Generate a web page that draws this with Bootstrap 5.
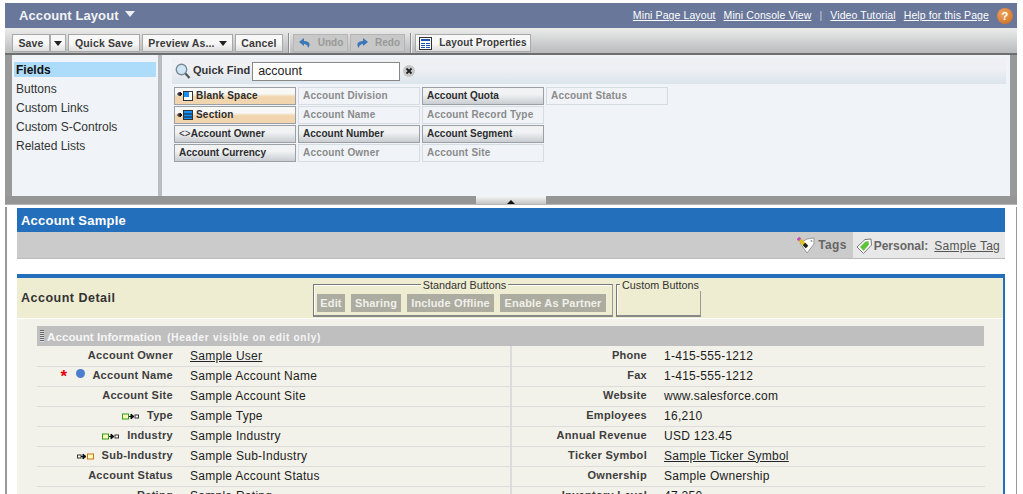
<!DOCTYPE html>
<html lang="en"><head><meta charset="utf-8"><title>Account Layout</title>
<link href="https://cdn.jsdelivr.net/npm/bootstrap@5.3.0/dist/css/bootstrap.min.css" rel="stylesheet">
<style>
html,body{height:494px;overflow:hidden;background:#fff}
body{padding:3px 6px 0 5px;font-family:"Liberation Sans",Arial,sans-serif;font-size:12px;color:#222;line-height:1.2}
a{color:inherit}
.lay-head{height:25px;background:#68779a;color:#fff;padding:0 4px 0 14px}
.lay-title{font-size:13px;font-weight:700;letter-spacing:.1px;color:#f2f3f6}
.caret-w{border:5px solid transparent;border-top:6px solid #eef0f4;border-bottom:0;margin-left:6px;margin-bottom:4px}
.lay-links{font-size:10.5px;letter-spacing:.1px;gap:8px}
.lay-links a{color:#fff}
.lay-pipe{color:#c9cfdc}
.help-dot{width:16px;height:16px;border-radius:50%;background:radial-gradient(circle at 40% 35%,#f0a860,#c8641c);color:#fff;font-weight:700;font-size:11px;line-height:16px;text-align:center}
.lay-tools{height:27px;padding:6px 0 0 7px;background:linear-gradient(#ececec,#b9babc);border-bottom:2px solid #6e6e6e;gap:2px}
.tb{--bs-btn-padding-x:0;--bs-btn-padding-y:0;--bs-btn-font-size:10.5px;--bs-btn-border-radius:0;height:18px;border:1px solid #a9a9a9;background:linear-gradient(#f8f8f8 50%,#dedede);font-weight:700;color:#3a3a3a;letter-spacing:.15px;line-height:16px;display:inline-flex;align-items:center;justify-content:center;white-space:nowrap}
.tb:hover{background:#eee;color:#333;border-color:#a9a9a9}
.tb-off{--bs-btn-font-size:10px;letter-spacing:0;color:#999;background:#c8c8c8;border-color:#b5b5b5;opacity:1}
.tb-sep{width:2px;height:20px;background:#eee;border-left:1px solid #8d8d8d;margin:-1px 1px 0 3px}
.w-save{width:38px}.w-drop{width:16px;margin-left:-2px}.w-qs{width:72px}.w-prev{width:91px;gap:4px}.w-can{width:48px}.w-undo{width:55px;gap:6px}.w-props{width:116px;gap:7px;--bs-btn-font-size:10px}
.tri-d{border:4px solid transparent;border-top:5px solid #222;border-bottom:0}
.lay-main{height:141px;padding:0 7px;background:#999}
.lay-side{width:142px;background:#f0f4f8;padding:7px 2px 0;border-right:4px solid #b9bcc0;box-sizing:content-box;flex:none}
.lay-side div{height:19px;line-height:19px;padding-left:2px;color:#333}
.lay-side .sel{height:15px;line-height:16px;background:#acdcf9;font-weight:700;color:#111;margin-bottom:3px}
.lay-right{flex:1;background:#f0f4f8;padding:3px 4px 0 10px}
.finder{height:26px;background:linear-gradient(#eff0f4 40%,#dbe5ec);padding-left:3px;margin-bottom:3px}
.finder b{color:#333;margin:0 2px;font-size:11px;letter-spacing:.03px}
.finder input{width:148px;height:19px;border:1px solid #888;padding:0 5px;font-size:12.5px;color:#222;background:#fff;border-radius:0;font-family:inherit;outline:0}
.clear-x{margin-left:3px}
.pal{display:grid;grid-template-columns:repeat(4,122px);grid-auto-rows:18px;gap:1px 2px;padding-left:2px}
.pi{border:1px solid #d5dce2;font-size:10px;font-weight:700;color:#8a8a8a;padding-left:4px;letter-spacing:.2px;line-height:16px;white-space:nowrap;display:flex;align-items:center}
.pi-on{border-color:#9aa0a4;color:#2c2c2c;letter-spacing:.02px;background:linear-gradient(#f0f2f4 40%,#c9cdd1)}
.pi-spec{border-color:#9aa0a4;color:#2c2c2c;padding-left:2px;background:linear-gradient(#f8f8f6 35%,#f0d5ae 55%)}
.pi-spec svg{margin-right:3px}
.lay-foot{height:9px;background:#959595;border-bottom:1px solid #b5b5b5;padding-left:471px}
.grip{width:70px;height:8px;background:linear-gradient(#f7f7f7,#c4c4c4);display:flex;justify-content:center;padding-top:3px}
.tri-u{border:4px solid transparent;border-bottom:4px solid #111;border-top:0}
.rec{margin-top:2px;height:290px;border-left:2px solid #999;border-right:1px solid #999;padding:1px 11px 0 10px}
.rec-title{height:24px;background:#236fbb;color:#fff;font-size:13px;font-weight:700;line-height:25px;padding-left:4px;letter-spacing:.22px}
.tagbar{height:27px;background:#cbcbcb;border-bottom:1px solid #bbb}
.tag-a{color:#666;font-weight:700;padding-right:6px;gap:2px;font-size:12px;letter-spacing:.3px}
.tag-b{height:100%;background:#e8e8e8;color:#666;padding:2px 5px 0 3px;font-weight:700;gap:2px}
.tag-b a{font-weight:400;color:#555;margin-left:4px;letter-spacing:.25px}
.rec-box{margin-top:15px;border-top:4px solid #236fbb;border-right:2px solid #236fbb;background:#f3f2ea;height:220px}
.rec-bar{height:41px;background:#eeecd1;border-bottom:1px solid #fff;padding-left:4px}
.rec-bar h2{font-size:12.5px;font-weight:700;margin:0;width:292px;color:#333;letter-spacing:.5px}
.fs{border:1px solid #777;border-right-color:#999;border-bottom-width:2px;border-bottom-color:#888;box-shadow:inset 1px 1px 0 #fff;height:33px;margin:6px 3px 0 0;position:relative;padding:9px 3px 0;gap:6px}
.fs-std{width:300px}
.fs-cus{width:85px}
.fs-l{position:absolute;top:-6px;left:3px;right:0;text-align:center;font-size:10.8px;line-height:12px;color:#333;white-space:nowrap}
.fs-l span{background:#eeecd1;padding:0 2px}
.gb{height:18px;background:#adaca0;color:#f0f0ea;font-size:11px;font-weight:700;line-height:18px;letter-spacing:.15px;text-align:center}
.g-e{width:28px}.g-s{width:50px}.g-i{width:87px}.g-p{width:106px}
.sec-wrap{padding:7px 19px 0 20px}
.sec-h{height:20px;background:#bfbfbf;color:#f6f6f6;font-weight:700;padding-left:3px;line-height:22px}
.sec-h .t1{font-size:11.7px}
.sec-h .t2{font-size:10px;letter-spacing:.7px;margin-left:6px}
.dots{width:4px;height:12px;margin-right:3px;background:repeating-linear-gradient(#666 0 1px,#ddd 1px 2px);vertical-align:-1px;display:inline-block}
.det{table-layout:fixed;width:100%;border-collapse:collapse}
.det td{height:20px;padding:0;border-bottom:1px solid #dcdcdc;white-space:nowrap;letter-spacing:.27px;color:#1c1c1c}
.det .k{text-align:right;font-size:11px;font-weight:700;color:#3d3d3d;padding-right:8px;letter-spacing:.3px;width:144px}
.det .k2{width:144px;border-left:2px solid #dcdcdc}
.det .v{padding-left:9px;width:330px}
.det svg{vertical-align:-1px}
.dot-b{display:inline-block;width:9px;height:9px;border-radius:50%;background:#4a7fd0;margin-right:7px;vertical-align:1px}
.req{color:#e8000d;font-weight:700;font-size:17px;line-height:10px;margin-right:9px;vertical-align:-3px}
</style></head>
<body>
<div class="lay-head d-flex align-items-center justify-content-between">
 <div class="d-flex align-items-center"><span class="lay-title">Account Layout</span><span class="caret-w"></span></div>
 <div class="lay-links d-flex align-items-center">
  <a href="#">Mini Page Layout</a><a href="#">Mini Console View</a><span class="lay-pipe">|</span><a href="#">Video Tutorial</a><a href="#">Help for this Page</a><span class="help-dot">?</span>
 </div>
</div>
<div class="lay-tools d-flex align-items-start">
 <button class="btn tb w-save">Save</button><button class="btn tb w-drop"><span class="tri-d"></span></button>
 <button class="btn tb w-qs">Quick Save</button>
 <button class="btn tb w-prev">Preview As... <span class="tri-d"></span></button>
 <button class="btn tb w-can">Cancel</button>
 <span class="tb-sep"></span>
 <button class="btn tb tb-off w-undo"><svg width="14" height="14" viewBox="0 0 14 14"><path d="M6 2 1 6l5 4V8c2 0 4 1 4 4 3-3 2-7-4-7z" fill="#3d77b8"/></svg>Undo</button>
 <button class="btn tb tb-off w-undo"><svg width="14" height="14" viewBox="0 0 14 14"><path d="M8 2l5 4-5 4V8c-2 0-4 1-4 4-3-3-2-7 4-7z" fill="#3d77b8"/></svg>Redo</button>
 <span class="tb-sep"></span>
 <button class="btn tb w-props"><svg width="13" height="13" viewBox="0 0 13 13"><rect x=".5" y=".5" width="12" height="12" fill="#fff" stroke="#333"/><rect x="2" y="2" width="9" height="2" fill="#1c55b5"/><path d="M2 6h4v1H2zM7 6h4v1H7zM2 8h4v1H2zM7 8h4v1H7zM2 10h4v1H2zM7 10h4v1H7z" fill="#1c55b5"/></svg>Layout Properties</button>
</div>
<div class="lay-main d-flex">
 <div class="lay-side"><div class="sel">Fields</div><div>Buttons</div><div>Custom Links</div><div>Custom S-Controls</div><div>Related Lists</div></div>
 <div class="lay-right">
  <div class="finder d-flex align-items-center">
   <svg width="16" height="17" viewBox="0 0 16 17"><circle cx="6.500" cy="6.500" r="5.200" fill="#cfe6f5" stroke="#7a8a96" stroke-width="1.400"/><path d="M10.500 10.500l4 4.500" stroke="#555" stroke-width="2.200"/></svg>
   <b>Quick Find</b><input type="text" value="account" aria-label="Quick Find">
   <svg class="clear-x" width="12" height="12" viewBox="0 0 12 12"><circle cx="6" cy="6" r="6" fill="#c8c8c8"/><path d="M3.500 3.500l5 5M8.500 3.500l-5 5" stroke="#222" stroke-width="1.800"/></svg>
  </div>
  <div class="pal">
   <div class="pi pi-spec"><svg width="16" height="12" viewBox="0 0 16 12"><path d="M0 4h3M2 2v4M3 2l2 2-2 2z" stroke="#111" fill="#111"/><rect x="6.500" y="1.500" width="9" height="9" fill="#fff" stroke="#333"/><rect x="7" y="2" width="5" height="5" fill="#1b8cf0"/></svg>Blank Space</div>
   <div class="pi">Account Division</div><div class="pi pi-on">Account Quota</div><div class="pi">Account Status</div>
   <div class="pi pi-spec"><svg width="16" height="12" viewBox="0 0 16 12"><path d="M0 6h3M2 4v4M3 4l2 2-2 2z" stroke="#111" fill="#111"/><rect x="6.500" y="1.500" width="9" height="9" fill="#1b8cf0" stroke="#333"/><path d="M7 5h8M7 8h8" stroke="#123"/></svg>Section</div>
   <div class="pi">Account Name</div><div class="pi">Account Record Type</div><div></div>
   <div class="pi pi-on"><span class="fw-normal">&lt;&gt;</span>Account Owner</div><div class="pi pi-on">Account Number</div><div class="pi pi-on">Account Segment</div><div></div>
   <div class="pi pi-on">Account Currency</div><div class="pi">Account Owner</div><div class="pi">Account Site</div>
  </div>
 </div>
</div>
<div class="lay-foot"><div class="grip"><span class="tri-u"></span></div></div>
<div class="rec">
 <div class="rec-title">Account Sample</div>
 <div class="tagbar d-flex justify-content-end align-items-center">
  <div class="tag-a d-flex align-items-center"><svg width="19" height="19" viewBox="0 0 19 19"><path d="M3 7 10 3l7-1 0 6-7 9z" fill="#fff" stroke="#999"/><circle cx="14.500" cy="5" r="1" fill="#999"/><path d="M1 2l9 9" stroke="#e0c020" stroke-width="3.500"/><path d="M7 8l3 3" stroke="#222" stroke-width="3.500"/><path d="M1 2l2 2" stroke="#c050c0" stroke-width="3.500"/></svg>Tags</div>
  <div class="tag-b d-flex align-items-center"><svg width="16" height="17" viewBox="0 0 16 17"><path d="M1 9 9 1.500l6-.5 .5 6-8 8.500z" fill="#fff" stroke="#777"/><path d="M4 9l5.500-5.500 3-.3 .5 3.500-5.500 6z" fill="#5fc23c"/></svg>Personal: <a href="#">Sample Tag</a></div>
 </div>
 <div class="rec-box">
  <div class="rec-bar d-flex">
   <h2 class="align-self-center">Account Detail</h2>
   <div class="fs fs-std d-flex"><div class="fs-l"><span>Standard Buttons</span></div><div class="gb g-e">Edit</div><div class="gb g-s">Sharing</div><div class="gb g-i">Include Offline</div><div class="gb g-p">Enable As Partner</div></div>
   <div class="fs fs-cus"><div class="fs-l"><span>Custom Buttons</span></div></div>
  </div>
  <div class="sec-wrap">
   <div class="sec-h"><span class="dots"></span><span class="t1">Account Information</span><span class="t2">(Header visible on edit only)</span></div>
   <table class="det">
    <tr><td class="k">Account Owner</td><td class="v"><a href="#" class="text-dark">Sample User</a></td><td class="k k2">Phone</td><td class="v">1-415-555-1212</td></tr>
    <tr><td class="k"><span class="req">*</span><span class="dot-b"></span>Account Name</td><td class="v">Sample Account Name</td><td class="k k2">Fax</td><td class="v">1-415-555-1212</td></tr>
    <tr><td class="k">Account Site</td><td class="v">Sample Account Site</td><td class="k k2">Website</td><td class="v">www.salesforce.com</td></tr>
    <tr><td class="k"><svg class="me-2" width="17" height="7" viewBox="0 0 17 7"><rect x=".5" y="1" width="6" height="5" fill="#ffffc0" stroke="#2a9a10"/><path d="M7 3.500h5M9 1l3 2.500L9 6z" stroke="#111" fill="#111"/><rect x="13" y="2" width="3.500" height="3" fill="#fff" stroke="#333"/></svg>Type</td><td class="v">Sample Type</td><td class="k k2">Employees</td><td class="v">16,210</td></tr>
    <tr><td class="k"><svg class="me-2" width="17" height="7" viewBox="0 0 17 7"><rect x=".5" y="1" width="6" height="5" fill="#ffffc0" stroke="#2a9a10"/><path d="M7 3.500h5M9 1l3 2.500L9 6z" stroke="#111" fill="#111"/><rect x="13" y="2" width="3.500" height="3" fill="#fff" stroke="#333"/></svg>Industry</td><td class="v">Sample Industry</td><td class="k k2">Annual Revenue</td><td class="v">USD 123.45</td></tr>
    <tr><td class="k"><svg class="me-2" width="17" height="7" viewBox="0 0 17 7"><rect x=".5" y="2" width="3.500" height="3" fill="#fff" stroke="#333"/><path d="M4 3.500h5M6 1l3 2.500L6 6z" stroke="#111" fill="#111"/><rect x="10.500" y="1" width="6" height="5" fill="#ffffc0" stroke="#d07010"/></svg>Sub-Industry</td><td class="v">Sample Sub-Industry</td><td class="k k2">Ticker Symbol</td><td class="v"><a href="#" class="text-dark">Sample Ticker Symbol</a></td></tr>
    <tr><td class="k">Account Status</td><td class="v">Sample Account Status</td><td class="k k2">Ownership</td><td class="v">Sample Ownership</td></tr>
    <tr><td class="k">Rating</td><td class="v">Sample Rating</td><td class="k k2">Inventory Level</td><td class="v">47,250</td></tr>
   </table>
  </div>
 </div>
</div>
<script src="https://cdn.jsdelivr.net/npm/bootstrap@5.3.0/dist/js/bootstrap.bundle.min.js"></script>
</body></html>
